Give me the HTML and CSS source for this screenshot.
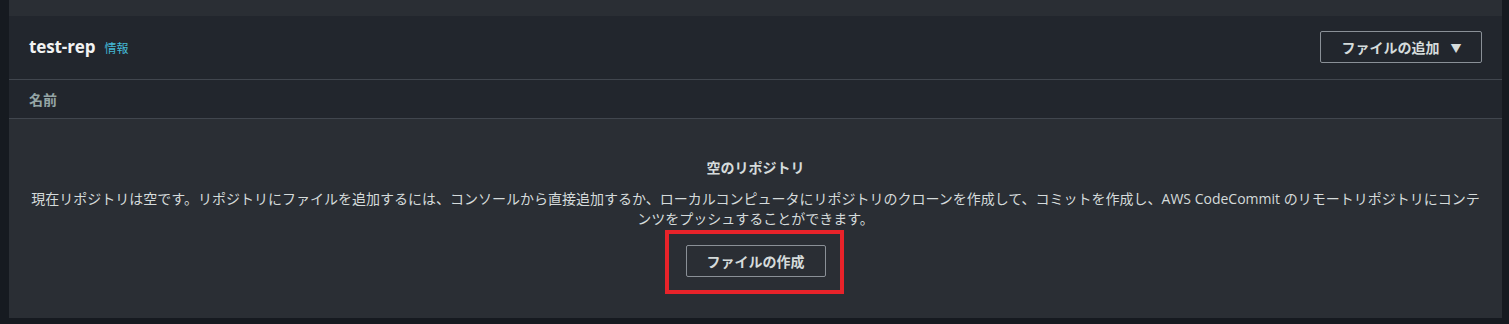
FILE: index.html
```html
<!DOCTYPE html>
<html lang="ja">
<head>
<meta charset="utf-8">
<title>test-rep</title>
<link rel="stylesheet" href="styles.css">
</head>
<body>
<div class="page">
  <div class="top-strip"></div>
  <section class="card">
    <header class="card-header">
      <div class="title-group">
        <h2 class="title">test-rep</h2>
        <a class="info" href="#">情報</a>
      </div>
      <button class="btn btn-dropdown">ファイルの追加<span class="caret">▼</span></button>
    </header>
    <div class="col-row">名前</div>
    <div class="empty">
      <h3 class="empty-title">空のリポジトリ</h3>
      <p class="empty-text">現在リポジトリは空です。リポジトリにファイルを追加するには、コンソールから直接追加するか、ローカルコンピュータにリポジトリのクローンを作成して、コミットを作成し、AWS CodeCommit のリモートリポジトリにコンテンツをプッシュすることができます。</p>
      <div class="action">
        <button class="btn">ファイルの作成</button>
        <span class="highlight"></span>
      </div>
    </div>
  </section>
</div>
</body>
</html>
```
FILE: styles.css
```css
* { box-sizing: border-box; }
html, body { margin: 0; padding: 0; }
body {
  background: #161a20;
  font-family: "Open Sans", "Noto Sans CJK JP", sans-serif;
  color: #d5dbdb;
  width: 1509px;
  height: 324px;
  overflow: hidden;
}
.page {
  padding: 0 7px 0 9px;
}
.top-strip {
  height: 16px;
  background: #2a2e34;
}
.card {
  background: #2a2e34;
}
.card-header {
  height: 64px;
  background: #22262d;
  border-bottom: 1px solid #41464e;
  display: flex;
  align-items: center;
  justify-content: space-between;
  padding: 0 20px 0 20px;
}
.title-group {
  display: flex;
  align-items: baseline;
  gap: 9px;
  margin-top: -3px;
}
.title {
  margin: 0;
  font-size: 17px;
  font-weight: 700;
  color: #f2f3f3;
  letter-spacing: -0.1px;
}
.info {
  font-size: 12px;
  color: #44b9d6;
  text-decoration: none;
  font-family: "Noto Sans CJK JP", sans-serif;
}
.btn {
  font-family: "Noto Sans CJK JP", sans-serif;
  font-size: 14px;
  font-weight: 700;
  color: #d5dbdb;
  background: transparent;
  border: 1px solid #8a9097;
  border-radius: 2px;
  height: 32px;
  padding: 0 20px;
  line-height: 1;
}
.btn-dropdown {
  margin-top: -2px;
  width: 162px;
  padding: 0 0 0 1px;
}
.caret {
  font-size: 11px;
  margin-left: 11px;
}
.col-row {
  height: 39px;
  background: #22262d;
  border-bottom: 1px solid #41464e;
  padding: 0 20px;
  display: flex;
  align-items: center;
  font-family: "Noto Sans CJK JP", sans-serif;
  font-size: 14px;
  font-weight: 700;
  color: #95a5a6;
}
.empty {
  height: 199px;
  padding: 38px 20px 0 20px;
  text-align: center;
  font-family: "Open Sans", "Noto Sans CJK JP", sans-serif;
}
.empty-title {
  margin: 0;
  font-family: "Noto Sans CJK JP", sans-serif;
  font-size: 14px;
  font-weight: 700;
  line-height: 20px;
  color: #d5dbdb;
}
.empty-text {
  margin: 12px 0 0 0;
  font-size: 14px;
  line-height: 20px;
  color: #d5dbdb;
}
.action {
  position: relative;
  display: inline-block;
  margin-top: 16px;
}
.highlight {
  position: absolute;
  left: -21px;
  top: -15px;
  width: 179px;
  height: 64px;
  border: 4px solid #e8232a;
}
```
